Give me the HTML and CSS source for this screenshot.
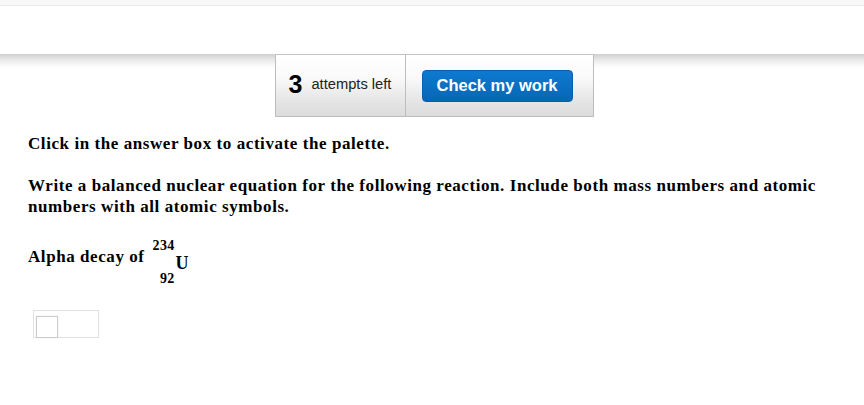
FILE: index.html
```html
<!DOCTYPE html>
<html>
<head>
<meta charset="utf-8">
<link rel="stylesheet" href="styles.css">
</head>
<body>
<div class="topstrip"></div>
<div class="header"></div>
<div class="shadowband">
  <div class="panel">
    <div class="attempts"><span class="num">3</span><span class="lbl">attempts left</span></div>
    <div class="check"><button class="btn">Check my work</button></div>
  </div>
</div>
<div class="content">
  <p class="line1">Click in the answer box to activate the palette.</p>
  <p class="line2">Write a balanced nuclear equation for the following reaction. Include both mass numbers and atomic numbers with all atomic symbols.</p>
  <div class="decay">
    <span class="dlabel">Alpha decay of</span>
    <span class="nuclide">
      <span class="nums"><span class="mass">234</span><span class="atomic">92</span></span>
      <span class="sym">U</span>
    </span>
  </div>
  <div class="answer"><div class="slot"></div></div>
</div>
</body>
</html>
```
FILE: styles.css
```css
html, body { margin: 0; padding: 0; background: #fff; }
body { width: 864px; height: 405px; overflow: hidden; font-family: "Liberation Serif", "Times New Roman", serif; color: #000; }
.topstrip { height: 5px; background: #f8f8f8; border-bottom: 1px solid #ebebeb; }
.header { height: 48px; background: #fff; }
.shadowband { height: 63px; background: linear-gradient(to bottom, #cfcfcf 0px, #e6e6e6 5px, #fbfbfb 12px, #fff 16px); display: flex; justify-content: center; padding-left: 4px; }
.panel { display: flex; height: 61px; border: 1px solid #bdbdbd; border-top: 1px solid #c4c4c4; box-sizing: content-box; }
.attempts, .check { background: linear-gradient(to bottom, #fff 0px, #fafafa 22px, #e6e6e6 45px, #dcdcdc 61px); display: flex; align-items: center; }
.attempts { width: 130px; border-right: 1px solid #bdbdbd; padding-left: 13px; box-sizing: border-box; font-family: "Liberation Sans", Arial, sans-serif; }
.num { font-size: 25px; font-weight: bold; margin-right: 9px; position: relative; top: -1px; }
.lbl { font-size: 14.7px; color: #222; position: relative; top: -2px; }
.check { width: 187px; padding-left: 16px; box-sizing: border-box; }
.btn { width: 151px; height: 32px; border: 1px solid #0b5ea8; border-radius: 4px; background: linear-gradient(to bottom, #0d7ad0, #0766b5); color: #fff; font-family: "Liberation Sans", Arial, sans-serif; font-weight: bold; font-size: 16.5px; padding: 0; margin-top: 0px; }
.content { padding-left: 28px; font-weight: bold; font-size: 17px; letter-spacing: 0.57px; }
.content p { margin: 0; }
.line1 { margin-top: 17px !important; line-height: 20px; }
.line2 { margin-top: 21px !important; width: 800px; line-height: 21px; }
.decay { display: flex; align-items: center; margin-top: 16px; height: 52px; }
.dlabel { margin-right: 8px; position: relative; top: -2px; }
.nuclide { display: flex; align-items: center; position: relative; top: 3px; }
.nums { display: flex; flex-direction: column; align-items: flex-end; font-size: 14px; letter-spacing: 0.3px; line-height: 14px; }
.mass { margin-bottom: 19px; }
.sym { font-size: 18px; letter-spacing: 0; margin-left: 1px; position: relative; top: 1px; }
.answer { margin-top: 25px; margin-left: 5px; width: 64px; height: 26px; border: 1px solid #e1e1e1; position: relative; }
.slot { position: absolute; left: 2px; top: 5px; width: 20px; height: 20px; border: 1px solid #cccccc; box-shadow: 0 0 1px #ddd; }
```
